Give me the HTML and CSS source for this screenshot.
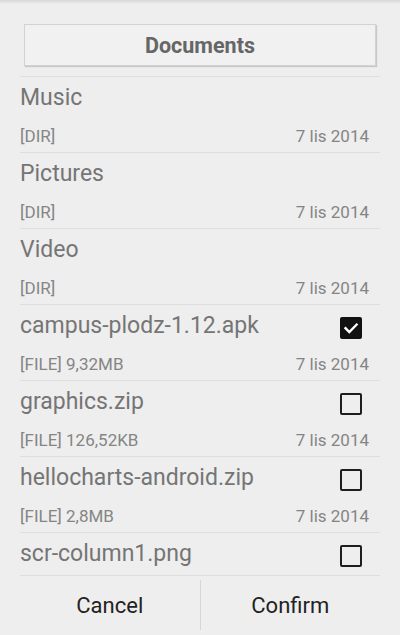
FILE: index.html
```html
<!DOCTYPE html>
<html>
<head>
<meta charset="utf-8">
<link rel="stylesheet" href="styles.css">
</head>
<body>
<div class="dialog">
  <div class="topshadow"></div>
  <div class="header"><div class="header-box">Documents</div></div>
  <div class="list">
    <div class="row">
      <div class="title-line"><span class="title">Music</span></div>
      <div class="meta"><span>[DIR]</span><span>7 lis 2014</span></div>
    </div>
    <div class="row">
      <div class="title-line"><span class="title">Pictures</span></div>
      <div class="meta"><span>[DIR]</span><span>7 lis 2014</span></div>
    </div>
    <div class="row">
      <div class="title-line"><span class="title">Video</span></div>
      <div class="meta"><span>[DIR]</span><span>7 lis 2014</span></div>
    </div>
    <div class="row">
      <div class="title-line"><span class="title">campus-plodz-1.12.apk</span>
        <span class="check checked"><svg viewBox="0 0 22 22" width="22" height="22"><path d="M5.5 11.2 L9.3 15 L16.6 7.6" fill="none" stroke="#fff" stroke-width="2.4" stroke-linecap="square"/></svg></span></div>
      <div class="meta"><span>[FILE] 9,32MB</span><span>7 lis 2014</span></div>
    </div>
    <div class="row">
      <div class="title-line"><span class="title">graphics.zip</span><span class="check"></span></div>
      <div class="meta"><span>[FILE] 126,52KB</span><span>7 lis 2014</span></div>
    </div>
    <div class="row">
      <div class="title-line"><span class="title">hellocharts-android.zip</span><span class="check"></span></div>
      <div class="meta"><span>[FILE] 2,8MB</span><span>7 lis 2014</span></div>
    </div>
    <div class="row">
      <div class="title-line"><span class="title">scr-column1.png</span><span class="check"></span></div>
    </div>
  </div>
  <div class="buttons">
    <div class="btn">Cancel</div>
    <div class="sep"></div>
    <div class="btn">Confirm</div>
  </div>
</div>
</body>
</html>
```

FILE: styles.css
```css
html, body {
  margin: 0;
  padding: 0;
  background: #eeeeee;
}
body {
  font-family: Roboto, "Liberation Sans", sans-serif;
  width: 400px;
  height: 635px;
  overflow: hidden;
}
.dialog {
  display: flex;
  flex-direction: column;
  height: 635px;
}
.topshadow {
  height: 4px;
  background: linear-gradient(#d6d6d6, #eeeeee);
}
.header {
  padding: 20px 24px 10px 24px;
}
.header-box {
  height: 40px;
  border: 1px solid #d2d2d2;
  background: #f1f1f1;
  box-shadow: 1px 1px 1px #c8c8c8;
  display: flex;
  align-items: center;
  justify-content: center;
  font-weight: bold;
  font-size: 21.5px;
  color: #666666;
}
.list {
  margin: 0 20px;
  height: 499px;
  overflow: hidden;
  flex: none;
}
.row {
  box-sizing: border-box;
  height: 76px;
  border-top: 1px solid #dddddd;
  padding: 8px 11px 0 0;
}
.title-line {
  display: flex;
  align-items: flex-start;
  justify-content: space-between;
  height: 26px;
}
.title {
  font-size: 23px;
  line-height: 26px;
  color: #757575;
}
.check {
  box-sizing: border-box;
  width: 22px;
  height: 22px;
  margin-top: 4px;
  margin-right: 7px;
  border: 2px solid #1e1e1e;
  border-radius: 2px;
  display: block;
}
.check.checked {
  border: none;
  background: #111111;
}
.check svg {
  display: block;
}
.meta {
  display: flex;
  justify-content: space-between;
  margin-top: 15px;
  font-size: 17px;
  line-height: 20px;
  color: #858585;
}
.buttons {
  margin: 0 20px;
  border-top: 1px solid #dddddd;
  flex: 1;
  display: flex;
  align-items: stretch;
  padding: 4px 0 5px 0;
}
.btn {
  flex: 1;
  display: flex;
  align-items: center;
  justify-content: center;
  font-size: 22px;
  color: #222222;
}
.sep {
  width: 1px;
  background: #d6d6d6;
}
```
